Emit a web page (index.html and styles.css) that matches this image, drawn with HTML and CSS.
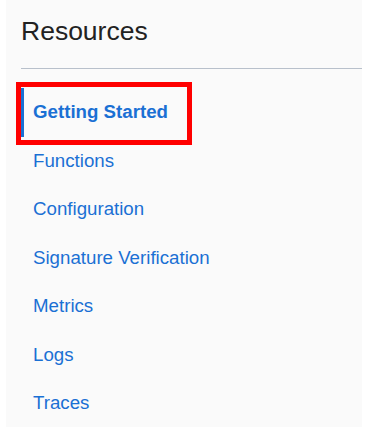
FILE: index.html
```html
<!DOCTYPE html>
<html>
<head>
	<title>Resources</title>
	<meta charset="utf-8">
	<meta name="viewport" content="width=device-width, initial-scale=1">
	<link rel="stylesheet" href="styles.css">
</head>
<body>
	<aside class="panel">
		<h2 class="panel-title">Resources</h2>
		<nav class="resource-nav">
			<a class="resource-link active" href="#">Getting Started</a>
			<a class="resource-link" href="#">Functions</a>
			<a class="resource-link" href="#">Configuration</a>
			<a class="resource-link" href="#">Signature Verification</a>
			<a class="resource-link" href="#">Metrics</a>
			<a class="resource-link" href="#">Logs</a>
			<a class="resource-link" href="#">Traces</a>
		</nav>
	</aside>
</body>
</html>
```

FILE: styles.css
```css
body {
	margin: 0;
	background-color: #ffffff;
	font-family: "Liberation Sans", Arial, sans-serif;
}

.panel {
	margin: 0 5px 0 6px;
	height: 427px;
	padding: 16px 0 0 15px;
	box-sizing: border-box;
	background-color: #fafafa;
}

.panel-title {
	margin: 0;
	padding-bottom: 22px;
	border-bottom: 1px solid #b8c0cb;
	font-size: 26.5px;
	line-height: 30px;
	font-weight: normal;
	color: #222222;
}

.resource-nav {
	display: flex;
	flex-direction: column;
	align-items: flex-start;
	padding-top: 19px;
}

.resource-link {
	position: relative;
	display: block;
	height: 48.5px;
	line-height: 48.5px;
	padding: 0 19px 0 9px;
	border-left: 3px solid transparent;
	font-size: 18.7px;
	color: #1a70d4;
	text-decoration: none;
}

.resource-link.active {
	font-weight: bold;
	border-left-color: #1a70d4;
}

.resource-link.active::after {
	content: "";
	position: absolute;
	left: -8px;
	right: -5px;
	top: -6px;
	bottom: -8px;
	border: 5px solid #ff0000;
}
```
